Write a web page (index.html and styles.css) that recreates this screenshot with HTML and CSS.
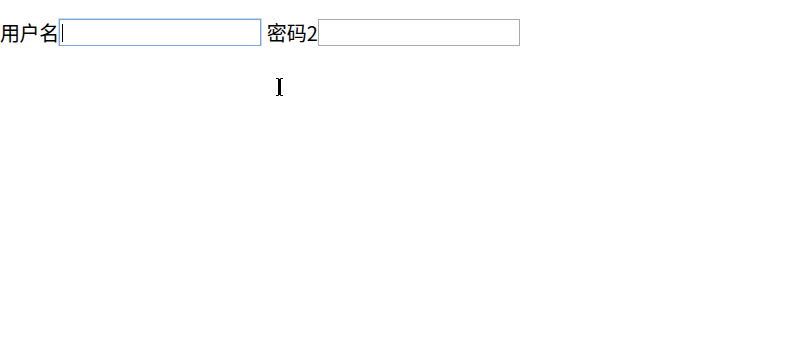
FILE: index.html
```html
<!DOCTYPE html>
<html lang="zh">
<head>
  <meta charset="UTF-8">
  <title>登录</title>
  <link rel="stylesheet" href="styles.css">
</head>
<body>
  <form class="login-row">
    <label for="user" class="user-label">用户名</label><input type="text" id="user" class="field field-focus">
    <label for="pwd" class="pwd-label">密码2</label><input type="password" id="pwd" class="field">
  </form>
  <div class="mouse-cursor">
    <svg width="7" height="18" viewBox="0 0 7 18">
      <path d="M0 0.5h2.5M4.5 0.5h2.5M2.5 0.5v17M4.5 0.5v17M3.5 1v16M0 17.5h2.5M4.5 17.5h2.5" stroke="#000" stroke-width="1" fill="none"/>
    </svg>
  </div>
</body>
</html>
```

FILE: styles.css
```css
body {
  margin: 0;
  padding-top: 18px;
  font-family: "Noto Sans CJK SC", "Liberation Sans", sans-serif;
  font-size: 20px;
  color: #000;
  background: #fff;
}
.login-row {
  display: flex;
  align-items: center;
  height: 28px;
}
.user-label {
  letter-spacing: -0.4px;
}
.field {
  box-sizing: border-box;
  width: 202px;
  height: 27px;
  margin: 0;
  border: 1px solid #a9a9a9;
  padding: 0 2px;
  font-size: 16px;
  outline: none;
}
.field-focus {
  border-color: #7ba4e0;
  box-shadow: 0 0 0 1px #c7daf5;
  background: linear-gradient(#000, #000) no-repeat 2px 4px / 1px 18px;
}
.pwd-label {
  margin-left: 6px;
}
.mouse-cursor {
  position: absolute;
  left: 276px;
  top: 78px;
  line-height: 0;
}
```
